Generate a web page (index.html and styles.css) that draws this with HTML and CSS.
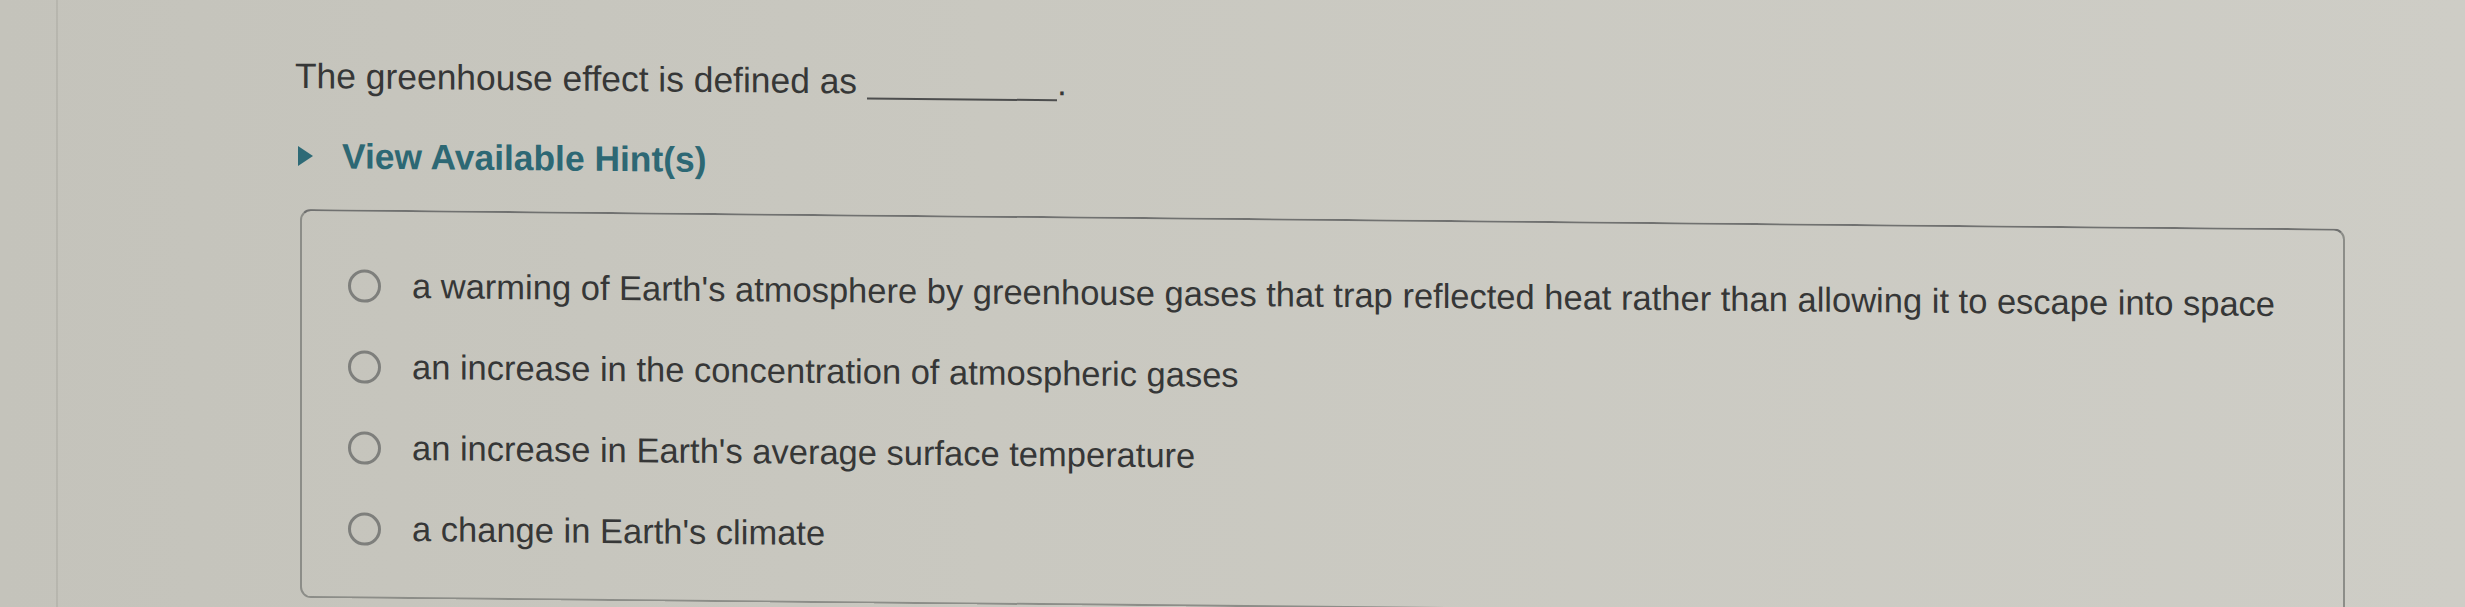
FILE: index.html
```html
<!DOCTYPE html>
<html lang="en">
<head>
<meta charset="utf-8">
<title>Question</title>
<link rel="stylesheet" href="styles.css">
</head>
<body>
<div class="page">
  <div class="content">
    <p class="question">The greenhouse effect is defined as <span class="blank"></span>.</p>
    <div class="hint">
      <svg class="caret" width="16" height="20" viewBox="0 0 16 20" aria-hidden="true"><polygon points="1,0 16,10 1,20" fill="#2e6a76"/></svg>
      <span class="hint-text">View Available Hint(s)</span>
    </div>
    <div class="choices">
      <label class="choice"><span class="radio"></span><span class="choice-text">a warming of Earth's atmosphere by greenhouse gases that trap reflected heat rather than allowing it to escape into space</span></label>
      <label class="choice"><span class="radio"></span><span class="choice-text">an increase in the concentration of atmospheric gases</span></label>
      <label class="choice"><span class="radio"></span><span class="choice-text">an increase in Earth's average surface temperature</span></label>
      <label class="choice"><span class="radio"></span><span class="choice-text">a change in Earth's climate</span></label>
    </div>
  </div>
</div>
</body>
</html>
```
FILE: styles.css
```css
html, body {
  margin: 0;
  padding: 0;
}
body {
  width: 2465px;
  height: 607px;
  overflow: hidden;
  background: linear-gradient(90deg, #c4c3bb 0%, #c9c8c0 40%, #cecdc6 100%);
  font-family: "Liberation Sans", Arial, sans-serif;
  color: #363737;
}
.page {
  margin-left: 56px;
  height: 607px;
  border-left: 2px solid rgba(90, 90, 85, 0.12);
}
.content {
  padding-top: 56px;
  padding-left: 237px;
  width: 2049px;
  transform: skewY(0.55deg);
  transform-origin: 242px 0;
}
.question {
  margin: 0;
  font-size: 35.4px;
  line-height: 40px;
  color: #363737;
}
.blank {
  display: inline-block;
  width: 190px;
  border-bottom: 2px solid #4d4e4e;
  vertical-align: -6px;
}
.hint {
  margin-top: 40px;
  display: flex;
  align-items: center;
  height: 40px;
}
.caret {
  margin-left: 2px;
  margin-right: 29px;
  flex: none;
}
.hint-text {
  font-size: 35.4px;
  line-height: 40px;
  font-weight: bold;
  color: #2d6874;
}
.choices {
  margin-top: 33px;
  margin-left: 5px;
  border: 2px solid #8c8d88;
  border-top-color: #707170;
  border-radius: 11px;
  padding: 54px 0 48px 46px;
  height: 283px;
  display: flex;
  flex-direction: column;
  gap: 41px;
  box-sizing: content-box;
  width: 1995px;
}
.choice {
  display: flex;
  align-items: center;
  height: 40px;
}
.radio {
  flex: none;
  width: 27px;
  height: 27px;
  border: 3px solid #7e7f7c;
  border-radius: 50%;
  margin-right: 31px;
}
.choice-text {
  font-size: 34.5px;
  line-height: 40px;
  color: #363737;
}
```
